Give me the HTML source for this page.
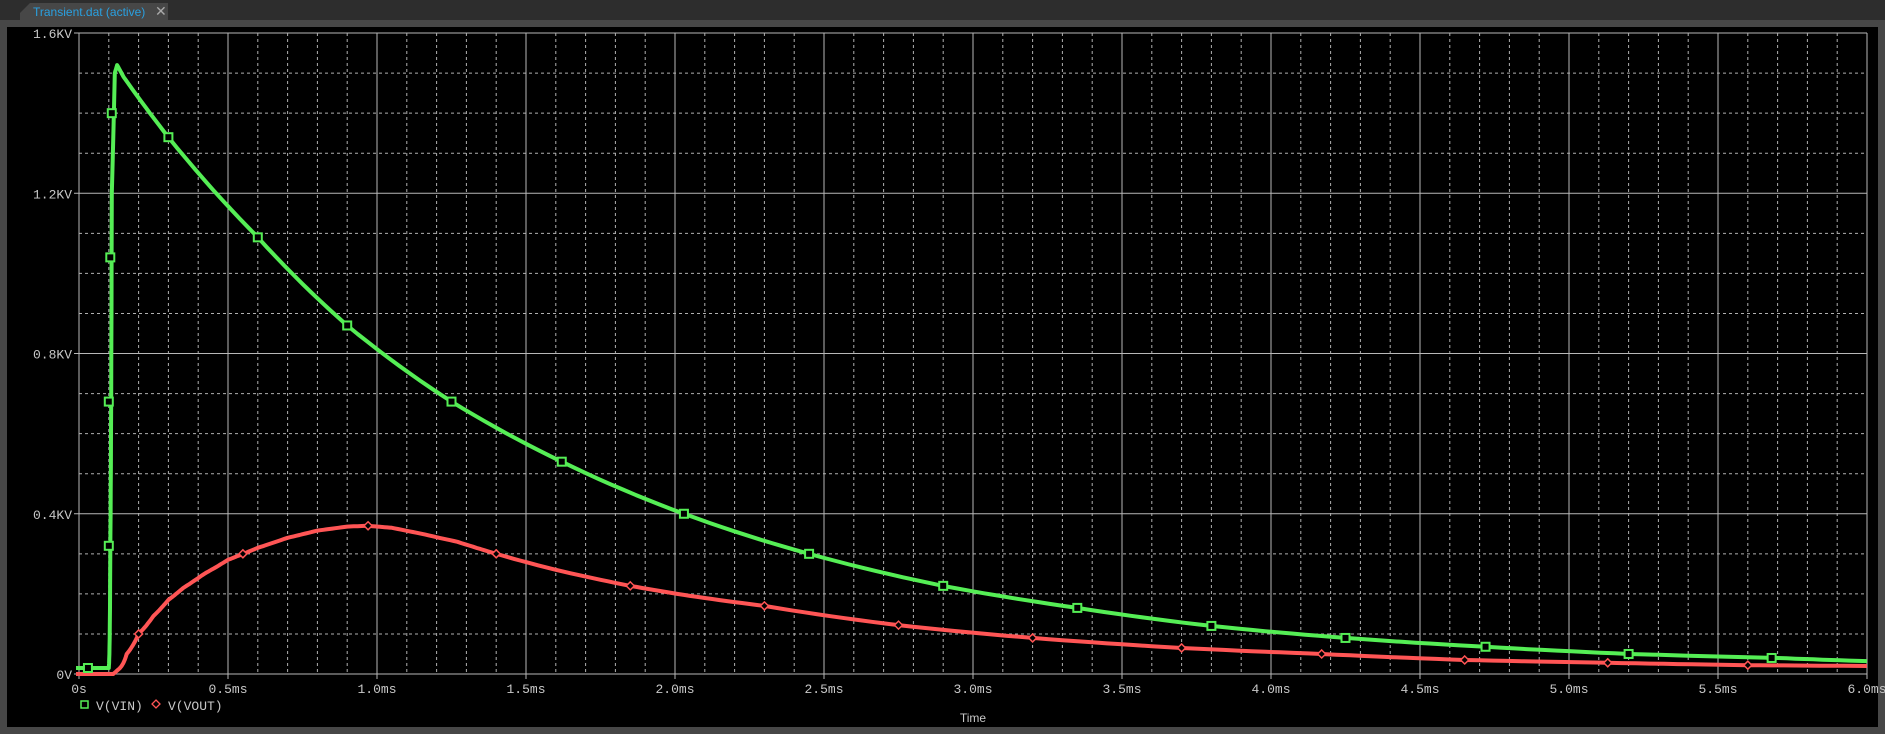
<!DOCTYPE html>
<html><head><meta charset="utf-8"><style>
html,body{margin:0;padding:0;background:#474747;width:1885px;height:734px;overflow:hidden}
#top{position:absolute;left:0;top:0;width:1885px;height:20px;background:#2d2d2d}
#tab{position:absolute;left:20px;top:3px;width:148px;height:19px;background:#474747;clip-path:polygon(10px 0,100% 0,100% 100%,0 100%,0 10px)}
#tabt{position:absolute;left:33px;top:5px;font:12px "Liberation Sans",sans-serif;color:#2aa0e0}
#tabx{position:absolute;left:155px;top:3px;font:14px "Liberation Sans",sans-serif;color:#aaa}
#frame{position:absolute;left:0;top:20px;width:1885px;height:714px;background:#474747}
#black{position:absolute;left:7px;top:27px;width:1871px;height:700px;background:#000}
svg{position:absolute;left:0;top:0}
text{font-family:"Liberation Mono",monospace;font-size:13px;fill:#c8c8c8}
</style></head><body>
<div id="top"></div><div id="frame"></div>
<div id="tab"></div><div id="tabt">Transient.dat (active)</div><div id="tabx">✕</div>
<div id="black"></div>
<svg id="s" width="1885" height="734" xmlns="http://www.w3.org/2000/svg"></svg>
<script>
const s=document.getElementById('s');let h='';
const X=t=>79+298*t, Y=v=>674-400.6*v;
for(let i=1;i<60;i++){if(i%5)h+=`<line x1="${X(i/10)}" y1="33" x2="${X(i/10)}" y2="674" stroke="#b0b0b0" stroke-dasharray="3,3"/>`;}
for(let i=1;i<16;i++){if(i%4)h+=`<line x1="79" y1="${Y(i/10)}" x2="1867" y2="${Y(i/10)}" stroke="#b0b0b0" stroke-dasharray="3,3"/>`;}
for(let i=0;i<=12;i++)h+=`<line x1="${X(i/2)}" y1="33" x2="${X(i/2)}" y2="679" stroke="#b8b8b8"/><text x="${X(i/2)}" y="693" text-anchor="middle">${i==0?'0s':(i/2).toFixed(1)+'ms'}</text>`;
const yl=['0V','0.4KV','0.8KV','1.2KV','1.6KV'];
for(let i=0;i<=4;i++)h+=`<line x1="74" y1="${Y(i*0.4)}" x2="1867" y2="${Y(i*0.4)}" stroke="#b8b8b8"/><text x="72" y="${Y(i*0.4)+5}" text-anchor="end">${yl[i]}</text>`;
function curve(pts){let out=[];for(let k=0;k<pts.length-1;k++){const[a,b]=[pts[k],pts[k+1]];for(let j=0;j<10;j++){const f=j/10;let v;if(a[1]>0&&b[1]>0)v=a[1]*Math.pow(b[1]/a[1],f);else v=a[1]+(b[1]-a[1])*f;out.push(X(a[0]+(b[0]-a[0])*f).toFixed(1)+','+Y(v).toFixed(1));}}const l=pts[pts.length-1];out.push(X(l[0])+','+Y(l[1]));return out.join(' ');}
const g=[[-0.01,0.015],[0.1,0.015],[0.105,0.3],[0.11,1.2],[0.12,1.5],[0.128,1.52],[0.15,1.49],[0.3,1.34],[0.6,1.09],[0.9,0.87],[1.25,0.68],[1.62,0.53],[2.03,0.40],[2.45,0.30],[2.9,0.22],[3.35,0.165],[3.8,0.12],[4.25,0.09],[4.72,0.068],[5.2,0.05],[5.7,0.04],[6.0,0.032]];
const r=[[-0.01,0.0],[0.115,0.0],[0.13,0.01],[0.16,0.05],[0.2,0.1],[0.25,0.145],[0.3,0.185],[0.35,0.215],[0.42,0.25],[0.5,0.285],[0.6,0.315],[0.7,0.34],[0.8,0.358],[0.9,0.368],[0.97,0.37],[1.05,0.365],[1.15,0.35],[1.27,0.33],[1.4,0.3],[1.6,0.26],[1.85,0.22],[2.05,0.195],[2.3,0.17],[2.75,0.122],[3.2,0.09],[3.7,0.065],[4.17,0.05],[4.65,0.035],[5.13,0.028],[5.6,0.022],[6.0,0.02]];
h+=`<polyline points="${curve(r)}" fill="none" stroke="#ff5555" stroke-width="4" stroke-linejoin="round"/>`;
h+=`<polyline points="${curve(g)}" fill="none" stroke="#55ee55" stroke-width="4" stroke-linejoin="round"/>`;
const gm=[[0.03,0.015],[0.1,0.32],[0.1,0.68],[0.105,1.04],[0.11,1.40],[0.3,1.34],[0.6,1.09],[0.9,0.87],[1.25,0.68],[1.62,0.53],[2.03,0.40],[2.45,0.30],[2.9,0.22],[3.35,0.165],[3.8,0.12],[4.25,0.09],[4.72,0.068],[5.2,0.05],[5.68,0.04]];
gm.forEach(p=>h+=`<rect x="${X(p[0])-4}" y="${Y(p[1])-4}" width="8" height="8" fill="#000" stroke="#55ee55" stroke-width="2"/>`);
const rm=[[0.2,0.1],[0.55,0.3],[0.97,0.37],[1.4,0.3],[1.85,0.22],[2.3,0.17],[2.75,0.122],[3.2,0.09],[3.7,0.065],[4.17,0.05],[4.65,0.035],[5.13,0.028],[5.6,0.022]];
rm.forEach(p=>{const x=X(p[0]),y=Y(p[1]);h+=`<polygon points="${x},${y-4} ${x+4},${y} ${x},${y+4} ${x-4},${y}" fill="#000" stroke="#ff5555" stroke-width="1.5"/>`});
h+=`<rect x="81" y="701" width="7" height="7" fill="none" stroke="#55ee55" stroke-width="1.5"/><text x="96" y="710">V(VIN)</text>`;
h+=`<polygon points="156,700 160,704 156,708 152,704" fill="none" stroke="#ff5555" stroke-width="1.3"/><text x="168" y="710">V(VOUT)</text>`;
h+=`<text x="973" y="722" text-anchor="middle" style="font-family:'Liberation Sans',sans-serif;font-size:12px">Time</text>`;
s.innerHTML=h;
</script>
</body></html>
